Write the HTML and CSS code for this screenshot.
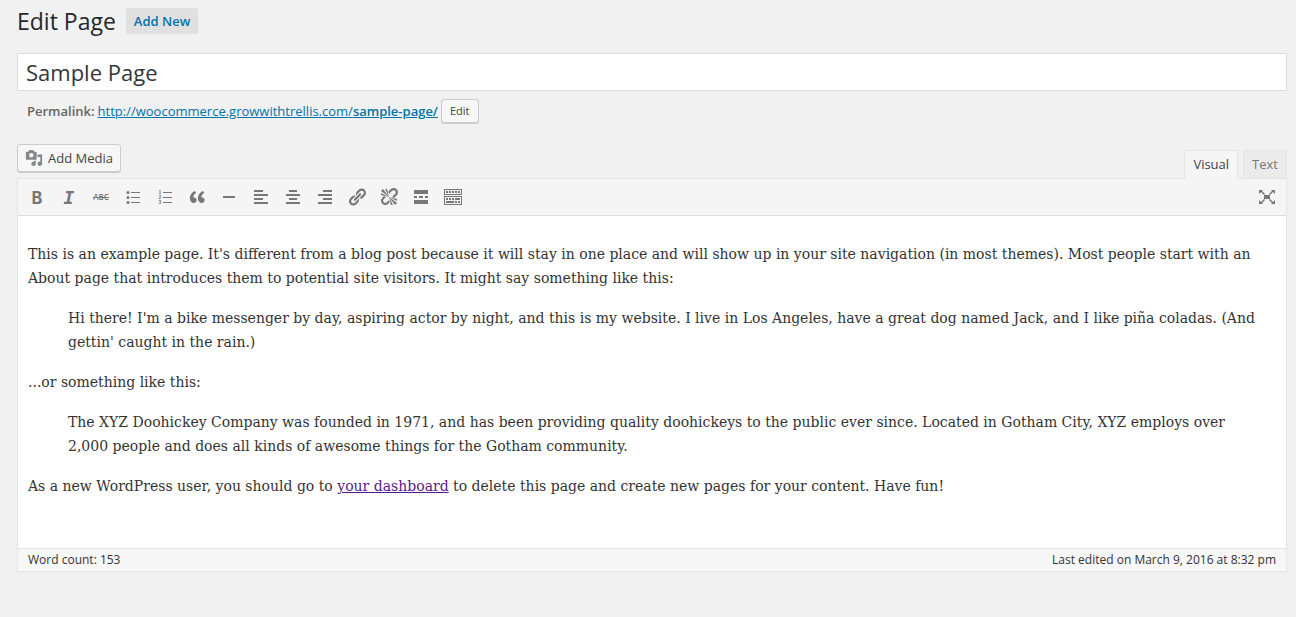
FILE: index.html
```html
<!DOCTYPE html>
<html lang="en">
<head>
  <meta charset="UTF-8" />
  <meta name="viewport" content="width=device-width, initial-scale=1.0"/>
  <title>Edit Page</title>
  <link rel="stylesheet" href="styles.css">
</head>
<body>
  <main class="wrap">
    <header class="page-header">
      <h1>Edit Page</h1>
      <a class="add-new" href="#">Add New</a>
    </header>

    <input class="title-input" type="text" value="Sample Page" aria-label="Page title">

    <div class="permalink">
      <strong>Permalink:</strong>
      <a href="#">http://woocommerce.growwithtrellis.com/<b>sample-page/</b></a>
      <button class="button button-small" type="button">Edit</button>
    </div>

    <div class="editor-tools">
      <button class="button add-media" type="button">
        <svg viewBox="0 0 20 20"><path d="M13 11V4c0-.55-.45-1-1-1h-1.670L9 1H5L3.670 3H2c-.55 0-1 .45-1 1v7c0 .55.45 1 1 1h10c.55 0 1-.45 1-1zM7 4.500c1.380 0 2.500 1.120 2.500 2.500S8.380 9.500 7 9.500 4.500 8.380 4.500 7 5.620 4.500 7 4.500zM14 6h5v10.500c0 1.380-1.120 2.500-2.500 2.500S14 17.880 14 16.500s1.120-2.500 2.500-2.500c.17 0 .34.02.5.05V9h-3V6zm-4 8.050V13h2v3.500c0 1.380-1.120 2.500-2.500 2.500S7 17.880 7 16.500 8.120 14 9.500 14c.17 0 .34.02.5.05z"/></svg>
        Add Media
      </button>
      <div class="tabs">
        <button class="tab active" type="button">Visual</button>
        <button class="tab" type="button">Text</button>
      </div>
    </div>

    <section class="editor">
      <div class="toolbar">
        <button type="button" aria-label="Bold"><svg viewBox="0 0 20 20"><text class="glyph" x="10" y="17">B</text></svg></button>
        <button type="button" aria-label="Italic"><svg viewBox="0 0 20 20"><text class="glyph italic" x="10" y="17">I</text></svg></button>
        <button type="button" aria-label="Strikethrough"><svg viewBox="0 0 20 20"><text class="abc" x="10" y="13">ABC</text><path d="M2 10h16v1H2z"/></svg></button>
        <button type="button" aria-label="Bulleted list"><svg viewBox="0 0 20 20"><circle cx="5" cy="5.500" r="1.500"/><circle cx="5" cy="10.500" r="1.500"/><circle cx="5" cy="15.500" r="1.500"/><path d="M8 5h9v1H8zM8 10h9v1H8zM8 15h9v1H8z"/></svg></button>
        <button type="button" aria-label="Numbered list"><svg viewBox="0 0 20 20"><g class="digits"><text x="5" y="7">1</text><text x="5" y="12">2</text><text x="5" y="17">3</text></g><path d="M8 5h9v1H8zM8 10h9v1H8zM8 15h9v1H8z"/></svg></button>
        <button type="button" aria-label="Blockquote"><svg viewBox="0 0 20 20"><path d="M9.490 13.220c0-.74-.2-1.380-.61-1.900-.62-.78-1.830-.88-2.530-.72-.29-1.650 1.110-3.750 2.920-4.650L7.880 4c-2.730 1.300-5.420 4.280-4.960 8.050C3.210 14.430 4.590 16 6.540 16c.85 0 1.560-.25 2.120-.75s.83-1.180.83-2.030zm8.050 0c0-.74-.2-1.380-.61-1.900-.63-.78-1.830-.88-2.530-.72-.29-1.650 1.110-3.750 2.920-4.650L15.930 4c-2.730 1.300-5.410 4.280-4.950 8.050.29 2.380 1.660 3.950 3.610 3.950.85 0 1.560-.25 2.120-.75s.83-1.180.83-2.030z"/></svg></button>
        <button type="button" aria-label="Horizontal line"><svg viewBox="0 0 20 20"><path d="M4 9h12v2H4z"/></svg></button>
        <button type="button" aria-label="Align left"><svg viewBox="0 0 20 20"><path d="M12 5V3H3v2h9zm5 4V7H3v2h14zm-5 4v-2H3v2h9zm5 4v-2H3v2h14z"/></svg></button>
        <button type="button" aria-label="Align center"><svg viewBox="0 0 20 20"><path d="M14 5V3H6v2h8zm3 4V7H3v2h14zm-3 4v-2H6v2h8zm3 4v-2H3v2h14z"/></svg></button>
        <button type="button" aria-label="Align right"><svg viewBox="0 0 20 20"><path d="M17 5V3H8v2h9zm0 4V7H3v2h14zm0 4v-2H8v2h9zm0 4v-2H3v2h14z"/></svg></button>
        <button type="button" aria-label="Insert link"><svg viewBox="0 0 20 20"><path d="M17.740 2.760c1.680 1.690 1.680 4.410 0 6.100l-1.530 1.520c-1.120 1.120-2.700 1.470-4.140 1.090l2.620-2.610.76-.77.76-.76c.84-.84.84-2.200 0-3.040-.84-.85-2.200-.85-3.040 0l-.77.76-3.380 3.380c-.37-1.440-.02-3.020 1.100-4.140l1.520-1.530c1.690-1.680 4.420-1.680 6.100 0zM8.590 13.430l5.340-5.340c.42-.42.42-1.100 0-1.520-.44-.43-1.130-.39-1.530 0l-5.330 5.340c-.42.42-.42 1.100 0 1.520.44.43 1.130.39 1.520 0zm-.76 2.290l4.140-4.150c.38 1.440.03 3.020-1.090 4.140l-1.520 1.530c-1.690 1.680-4.410 1.680-6.100 0-1.680-1.680-1.680-4.420 0-6.100l1.530-1.520c1.120-1.120 2.700-1.470 4.140-1.100l-4.140 4.150c-.85.84-.85 2.200 0 3.050.84.84 2.200.84 3.040 0z"/></svg></button>
        <button type="button" aria-label="Remove link"><svg viewBox="0 0 20 20"><path d="M17.740 2.260c1.680 1.690 1.680 4.410 0 6.100l-1.530 1.520c-.32.33-.69.58-1.080.77L13 10l1.690-1.640.76-.77.76-.76c.84-.84.84-2.200 0-3.040-.84-.85-2.200-.85-3.040 0l-.77.76-.76.76L10 7l-.65-2.140c.19-.38.44-.75.77-1.070l1.520-1.530c1.690-1.680 4.420-1.680 6.100 0zM2 4l8 6-6-8zm4-2l4 8-2-8H6zM2 6l8 4-8-2V6zm7.360 7.690L10 13l.74 2.350-1.380 1.390c-1.690 1.680-4.410 1.680-6.100 0-1.680-1.680-1.680-4.420 0-6.100l1.390-1.380L7 10l-.69.64-1.520 1.530c-.85.84-.85 2.200 0 3.040.84.85 2.200.85 3.040 0zM18 16l-8-6 6 8zm-4 2l-4-8 2 8h2zm4-4l-8-4 8 2v2z"/></svg></button>
        <button type="button" aria-label="Read more tag"><svg viewBox="0 0 20 20"><path d="M17 7V3H3v4h14zM6 11V9H3v2h3zm6 0V9H8v2h4zm5 0V9h-3v2h3zm0 6v-4H3v4h14z"/></svg></button>
        <button type="button" aria-label="Toolbar toggle"><svg viewBox="0 0 20 20"><path d="M19 2v6H1V2h18zm-1 5V3H2v4h16zM5 4v2H3V4h2zm3 0v2H6V4h2zm3 0v2H9V4h2zm3 0v2h-2V4h2zm3 0v2h-2V4h2zm2 5v9H1V9h18zm-1 8v-7H2v7h16zM5 11v2H3v-2h2zm3 0v2H6v-2h2zm3 0v2H9v-2h2zm6 0v2h-5v-2h5zm-6 3v2H3v-2h8zm3 0v2h-2v-2h2zm3 0v2h-2v-2h2z"/></svg></button>
        <button class="fullscreen" type="button" aria-label="Fullscreen"><svg viewBox="0 0 20 20"><path d="M7 8h6v4H7zM2 3h4L5 4l3 3-1 1-3-3-2 2zM18 3h-4l1 1-3 3 1 1 3-3 2 2zM2 17h4l-1-1 3-3-1-1-3 3-2-2zM18 17h-4l1-1-3-3 1-1 3 3 2-2z"/></svg></button>
      </div>

      <div class="content" contenteditable="true" spellcheck="false">
        <p>This is an example page. It's different from a blog post because it will stay in one place and will show up in your site navigation (in most themes). Most people start with an About page that introduces them to potential site visitors. It might say something like this:</p>
        <blockquote>Hi there! I'm a bike messenger by day, aspiring actor by night, and this is my website. I live in Los Angeles, have a great dog named Jack, and I like piña coladas. (And gettin' caught in the rain.)</blockquote>
        <p>...or something like this:</p>
        <blockquote>The XYZ Doohickey Company was founded in 1971, and has been providing quality doohickeys to the public ever since. Located in Gotham City, XYZ employs over 2,000 people and does all kinds of awesome things for the Gotham community.</blockquote>
        <p>As a new WordPress user, you should go to <a href="#">your dashboard</a> to delete this page and create new pages for your content. Have fun!</p>
      </div>

      <footer class="status">
        <span>Word count: 153</span>
        <span>Last edited on March 9, 2016 at 8:32 pm</span>
      </footer>
    </section>
  </main>
</body>
</html>
```
FILE: styles.css
```css
* {
  box-sizing: border-box;
}

body {
  margin: 0;
  background: #f1f1f1;
  color: #444;
  font: 13px/20px "Open Sans", sans-serif;
}

svg {
  display: block;
  width: 20px;
  height: 20px;
  fill: currentColor;
}

button {
  font-family: inherit;
  cursor: pointer;
}

.wrap {
  padding: 5px 9px 0 17px;
}

.page-header {
  display: flex;
  align-items: center;
  gap: 10px;
  height: 31px;
}

h1 {
  margin: 0;
  font-size: 23px;
  line-height: 30px;
  font-weight: 400;
  color: #23282d;
}

.add-new {
  padding: 3px 8px;
  border-radius: 2px;
  background: #e0e0e0;
  color: #0073aa;
  font-weight: 600;
  text-decoration: none;
}

.title-input {
  display: block;
  width: 100%;
  height: 38px;
  margin-top: 17px;
  padding: 0 8px;
  border: 1px solid #ddd;
  background: #fff;
  color: #32373c;
  font: 22px/30px "Open Sans", sans-serif;
  outline: none;
}

.permalink {
  display: flex;
  align-items: center;
  gap: 3px;
  margin-top: 8px;
  padding-left: 10px;
  color: #666;
}

.permalink strong {
  font-weight: 600;
}

.permalink a {
  color: #0073aa;
}

.permalink b {
  font-weight: 600;
}

.button {
  border: 1px solid #ccc;
  border-radius: 3px;
  background: #f7f7f7;
  box-shadow: 0 1px 0 #ccc;
  color: #444;
}

.button-small {
  height: 24px;
  padding: 0 8px 1px;
  font-size: 11px;
}

.editor-tools {
  display: flex;
  justify-content: space-between;
  align-items: flex-start;
  margin-top: 21px;
}

.add-media {
  display: flex;
  align-items: center;
  gap: 5px;
  height: 28px;
  padding: 0 7px;
  font-size: 13px;
}

.add-media svg {
  width: 18px;
  height: 18px;
  color: #82878c;
}

.tabs {
  display: flex;
  gap: 5px;
  margin-top: 6px;
}

.tab {
  height: 28px;
  padding: 0 8px 1px;
  border: 1px solid #e5e5e5;
  border-bottom: 0;
  background: #ebebeb;
  color: #777;
  font-size: 13px;
}

.tab.active {
  height: 29px;
  margin-bottom: -1px;
  padding-bottom: 2px;
  background: #f5f5f5;
  color: #444;
  z-index: 1;
}

.editor {
  border: 1px solid #e5e5e5;
  box-shadow: 0 1px 1px rgba(0,0,0,0.04);
}

.toolbar {
  display: flex;
  align-items: center;
  gap: 4px;
  height: 37px;
  padding: 0 5px;
  border-bottom: 1px solid #ddd;
  background: #f5f5f5;
}

.toolbar button {
  width: 28px;
  height: 28px;
  padding: 4px;
  border: 0;
  background: none;
  color: #777;
}

.toolbar .fullscreen {
  margin-left: auto;
}

.glyph {
  font: bold 18px "DejaVu Sans Mono", monospace;
  text-anchor: middle;
}

.italic {
  font-style: italic;
}

.abc {
  font: 600 8px "Open Sans", sans-serif;
  text-anchor: middle;
}

.digits {
  font: bold 5px "Liberation Sans", sans-serif;
  text-anchor: middle;
}

.content {
  min-height: 332px;
  padding: 26px 10px;
  background: #fff;
  color: #333;
  font: 14px/24px "DejaVu Serif", serif;
  outline: none;
}

.content p {
  margin: 0 0 16px;
}

.content blockquote {
  margin: 0 10px 16px 40px;
}

.content a {
  color: #551a8b;
}

.status {
  display: flex;
  justify-content: space-between;
  padding: 1px 10px;
  border-top: 1px solid #e5e5e5;
  background: #f7f7f7;
  color: #333;
  font-size: 12px;
}
```
